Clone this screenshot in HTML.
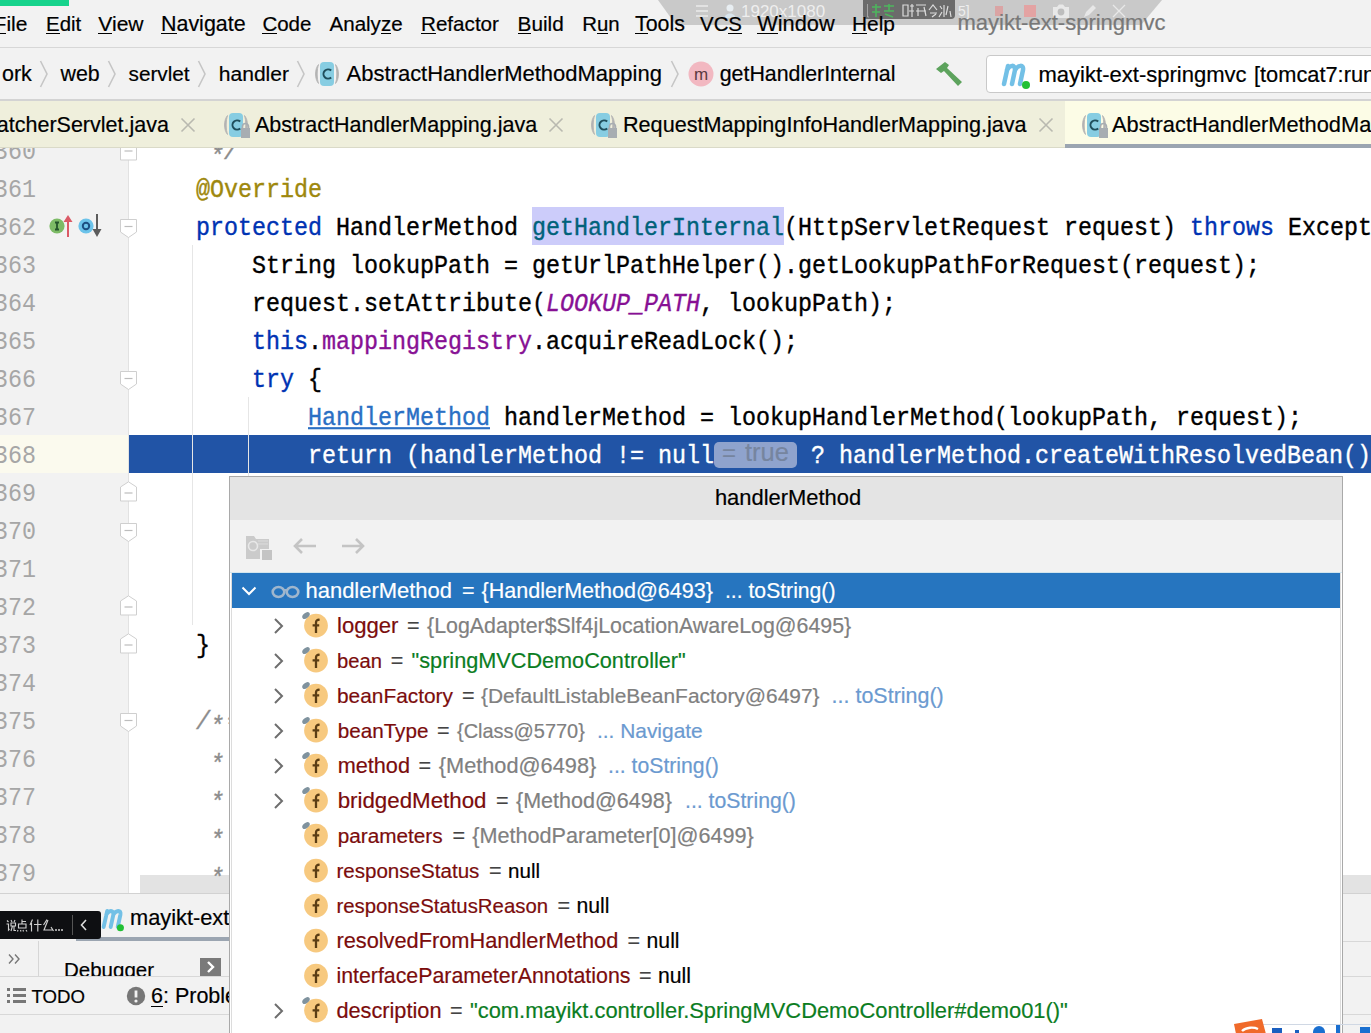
<!DOCTYPE html>
<html><head><meta charset="utf-8">
<style>
*{margin:0;padding:0;box-sizing:border-box}
html,body{width:1371px;height:1033px;overflow:hidden;background:#f2f2f2;font-family:"Liberation Sans",sans-serif;position:relative}
.a{position:absolute;white-space:pre}
.t{-webkit-text-stroke:0.2px currentColor}
#editor{position:absolute;left:0;top:148px;width:1371px;height:745px;background:#fff;overflow:hidden}
#gutter{position:absolute;left:0;top:0;width:129px;height:745px;background:#f2f2f2;border-right:1px solid #e2e2e2}
.ln{position:absolute;left:-6px;width:42px;text-align:right;font-family:"Liberation Mono",monospace;font-size:23.33px;line-height:38px;color:#a6a6a6;padding-top:3px;transform:scaleY(1.07);transform-origin:0 28px}
.cl{position:absolute;left:196px;font-family:"Liberation Mono",monospace;font-size:23.33px;line-height:38px;height:38px;color:#000;white-space:pre;padding-top:3px;transform:scaleY(1.07);transform-origin:0 28px;-webkit-text-stroke:0.35px currentColor}
.kw{color:#0033b3}.an{color:#9e880d}.md{color:#00627a}.fd{color:#871094}.it{font-style:italic}.cm{color:#8c8c8c}.ast{position:relative;top:5px}
.lnk{color:#2a6fc4;text-decoration:underline;text-underline-offset:2px;text-decoration-thickness:1.5px}
.sel,.sel span{color:#fff}
.guide{position:absolute;width:1px;background:#e6e6e6}
#popup{position:absolute;left:229px;top:476px;width:1114px;height:600px;background:#fff;border:1px solid #a9a9a9;overflow:hidden}
</style></head><body>
<div class="a" style="left:0;top:0;width:1371px;height:48px;background:#f2f2f2;border-bottom:1px solid #d7d7d7"></div>
<div class="a" style="left:0;top:0;width:69px;height:6px;background:#17d38c"></div>
<div class="a" style="left:0;top:0;width:1371px;height:26px;background:rgba(150,150,150,0.45);clip-path:polygon(658px 0,1162px 0,1141px 25px,676px 25px)"></div>
<svg class="a" style="left:695px;top:4px" width="14" height="14" viewBox="0 0 14 14"><path d="M1 2 H13 M1 7 H13 M1 12 H13" stroke="#eaeaea" stroke-width="1.5"/></svg>
<svg class="a" style="left:724px;top:3px" width="12" height="16" viewBox="0 0 12 16"><circle cx="6" cy="5" r="3.5" fill="#e8eef2"/><path d="M0.5 15 C1 9 11 9 11.5 15 Z" fill="#d8e4ec"/></svg>
<div class="a" style="left:741px;top:3px;font-size:17px;line-height:17px;color:rgba(255,255,255,0.7)">1920x1080</div>
<div class="a" style="left:863px;top:0;width:92px;height:19px;background:rgba(90,90,90,0.85);border-radius:0 0 4px 4px"></div>
<svg class="a" style="left:866px;top:3px" width="34" height="15" viewBox="0 0 34 15"><path d="M1.5 1 V14 H3" stroke="rgba(200,200,200,.6)" stroke-width="1" fill="none"/><path d="M6 4 H15 M10 1 V14 M6 9 H14 M18 3 H28 M23 1 V8 M18 8 H28 M19 11 L27 14" stroke="rgba(70,200,90,.8)" stroke-width="1.6" fill="none"/></svg>
<svg class="a" style="left:902px;top:3px" width="50" height="15" viewBox="0 0 50 15"><path d="M1 2 H6 V13 H1 Z M8 3 H12 M10 1 V14 M7 8 H12 M14 2 H24 M16 5 V13 M14 8 H24 M22 4 L24 13 M27 7 L31 2 L35 7 M28 10 H35 M30 14 L34 11 M38 3 L40 6 M37 14 L40 9 M42 2 V14 M46 3 L44 12 M48 8 L49 14" stroke="rgba(240,240,240,.85)" stroke-width="1.2" fill="none"/></svg>
<div class="a" style="left:958px;top:4px;font-size:14px;line-height:14px;color:rgba(255,255,255,.7)">5]</div>
<div class="a" style="left:995px;top:6px;width:8px;height:10px;background:rgba(230,140,140,.6)"></div>
<div class="a" style="left:1024px;top:5px;width:12px;height:12px;background:rgba(235,150,150,.75)"></div>
<svg class="a" style="left:1052px;top:3px" width="18" height="16" viewBox="0 0 18 16"><path d="M1 4 H5 L7 1.5 H11 L13 4 H17 V15 H1 Z" fill="rgba(240,240,240,.8)"/><circle cx="9" cy="9" r="3.4" fill="#bdbdbd"/></svg>
<svg class="a" style="left:1082px;top:3px" width="16" height="16" viewBox="0 0 16 16"><path d="M2 14 L4 9 L11 2 L14 5 L7 12 Z" fill="rgba(240,240,240,.75)"/></svg>
<svg class="a" style="left:1112px;top:4px" width="14" height="14" viewBox="0 0 14 14"><path d="M1 1 L13 13 M13 1 L1 13" stroke="rgba(240,240,240,.8)" stroke-width="1.4"/></svg>
<div class="a t" style="left:-6.41px;top:13px;font-family:'Liberation Sans';font-size:21.00px;line-height:1;color:#000">File</div>
<div class="a" style="left:-6.4px;top:32.5px;width:12.8px;height:1.6px;background:#000"></div>
<div class="a t" style="left:46.05px;top:14px;font-family:'Liberation Sans';font-size:20.40px;line-height:1;color:#000">Edit</div>
<div class="a" style="left:46.1px;top:32.5px;width:13.6px;height:1.6px;background:#000"></div>
<div class="a t" style="left:98.30px;top:13px;font-family:'Liberation Sans';font-size:21.07px;line-height:1;color:#000">View</div>
<div class="a" style="left:98.3px;top:32.5px;width:14.1px;height:1.6px;background:#000"></div>
<div class="a t" style="left:161.00px;top:14px;font-family:'Liberation Sans';font-size:21.44px;line-height:1;color:#000">Navigate</div>
<div class="a" style="left:161.0px;top:32.5px;width:15.5px;height:1.6px;background:#000"></div>
<div class="a t" style="left:262.40px;top:14px;font-family:'Liberation Sans';font-size:20.50px;line-height:1;color:#000">Code</div>
<div class="a" style="left:262.4px;top:32.5px;width:14.8px;height:1.6px;background:#000"></div>
<div class="a t" style="left:329.50px;top:14px;font-family:'Liberation Sans';font-size:20.56px;line-height:1;color:#000">Analyze</div>
<div class="a" style="left:380.9px;top:32.5px;width:10.3px;height:1.6px;background:#000"></div>
<div class="a t" style="left:421.00px;top:14px;font-family:'Liberation Sans';font-size:20.63px;line-height:1;color:#000">Refactor</div>
<div class="a" style="left:421.0px;top:32.5px;width:14.9px;height:1.6px;background:#000"></div>
<div class="a t" style="left:517.60px;top:14px;font-family:'Liberation Sans';font-size:20.76px;line-height:1;color:#000">Build</div>
<div class="a" style="left:517.6px;top:32.5px;width:13.8px;height:1.6px;background:#000"></div>
<div class="a t" style="left:582.18px;top:14px;font-family:'Liberation Sans';font-size:20.40px;line-height:1;color:#000">Run</div>
<div class="a" style="left:596.9px;top:32.5px;width:11.3px;height:1.6px;background:#000"></div>
<div class="a t" style="left:635.00px;top:14px;font-family:'Liberation Sans';font-size:21.41px;line-height:1;color:#000">Tools</div>
<div class="a" style="left:635.0px;top:32.5px;width:13.1px;height:1.6px;background:#000"></div>
<div class="a t" style="left:700.04px;top:14px;font-family:'Liberation Sans';font-size:20.40px;line-height:1;color:#000">VCS</div>
<div class="a" style="left:728.4px;top:32.5px;width:13.6px;height:1.6px;background:#000"></div>
<div class="a t" style="left:757.20px;top:13px;font-family:'Liberation Sans';font-size:21.80px;line-height:1;color:#000">Window</div>
<div class="a" style="left:757.2px;top:32.5px;width:20.6px;height:1.6px;background:#000"></div>
<div class="a t" style="left:852.00px;top:14px;font-family:'Liberation Sans';font-size:20.92px;line-height:1;color:#000">Help</div>
<div class="a" style="left:852.0px;top:32.5px;width:15.1px;height:1.6px;background:#000"></div>
<div class="a t" style="left:957.50px;top:12px;font-family:'Liberation Sans';font-size:22.03px;line-height:1;color:#787878">mayikt-ext-springmvc</div>
<div class="a" style="left:0;top:48px;width:1371px;height:53px;background:#f2f2f2;border-bottom:2px solid #d3d3d3"></div>
<div class="a t" style="left:2.01px;top:64px;font-family:'Liberation Sans';font-size:21.50px;line-height:1;color:#000">ork</div>
<div class="a t" style="left:60.51px;top:64px;font-family:'Liberation Sans';font-size:21.36px;line-height:1;color:#000">web</div>
<div class="a t" style="left:128.50px;top:64px;font-family:'Liberation Sans';font-size:20.75px;line-height:1;color:#000">servlet</div>
<div class="a t" style="left:218.80px;top:63px;font-family:'Liberation Sans';font-size:21.05px;line-height:1;color:#000">handler</div>
<div class="a t" style="left:346.60px;top:63px;font-family:'Liberation Sans';font-size:21.99px;line-height:1;color:#000">AbstractHandlerMethodMapping</div>
<div class="a t" style="left:719.70px;top:64px;font-family:'Liberation Sans';font-size:21.36px;line-height:1;color:#000">getHandlerInternal</div>
<svg class="a" style="left:39px;top:60px" width="10" height="28" viewBox="0 0 10 28"><path d="M1.5 1 L8 14 L1.5 27" stroke="#c6c6c6" stroke-width="1.6" fill="none"/></svg>
<svg class="a" style="left:107px;top:60px" width="10" height="28" viewBox="0 0 10 28"><path d="M1.5 1 L8 14 L1.5 27" stroke="#c6c6c6" stroke-width="1.6" fill="none"/></svg>
<svg class="a" style="left:197px;top:60px" width="10" height="28" viewBox="0 0 10 28"><path d="M1.5 1 L8 14 L1.5 27" stroke="#c6c6c6" stroke-width="1.6" fill="none"/></svg>
<svg class="a" style="left:296px;top:60px" width="10" height="28" viewBox="0 0 10 28"><path d="M1.5 1 L8 14 L1.5 27" stroke="#c6c6c6" stroke-width="1.6" fill="none"/></svg>
<svg class="a" style="left:670px;top:60px" width="10" height="28" viewBox="0 0 10 28"><path d="M1.5 1 L8 14 L1.5 27" stroke="#c6c6c6" stroke-width="1.6" fill="none"/></svg>
<svg class="a" style="left:313px;top:60px" width="28" height="28" viewBox="0 0 28 28"><path d="M5.5 4.5 C1.5 9 1.5 19 5.5 23.5 C3.8 19 3.8 9 5.5 4.5 Z" fill="#b3b3b3" stroke="#b3b3b3" stroke-width="0.8"/><path d="M22.5 4.5 C26.5 9 26.5 19 22.5 23.5 C24.2 19 24.2 9 22.5 4.5 Z" fill="#b3b3b3" stroke="#b3b3b3" stroke-width="0.8"/><rect x="7" y="2" width="14" height="24" rx="4" ry="4" fill="#87cde2"/><path d="M18.2 10.6 A4.6 4.6 0 1 0 18.2 17.4" stroke="#1f4e5c" stroke-width="2" fill="none"/></svg>
<svg class="a" style="left:687px;top:60px" width="28" height="28" viewBox="0 0 28 28"><circle cx="14" cy="14" r="12.5" fill="#f2b8c1"/><text x="14" y="20" text-anchor="middle" font-family="Liberation Sans" font-size="17" fill="#5b3a40">m</text></svg>
<svg class="a" style="left:933px;top:60px" width="32" height="28" viewBox="0 0 32 28"><path d="M3 9 L12 2 L16 5 L14 8 L29 22 L25 26 L11 11 L8 13 Z" fill="#5da35d"/></svg>
<div class="a" style="left:986px;top:55px;width:400px;height:38px;background:#fff;border:1px solid #c9c9c9;border-radius:4px"></div>
<svg class="a" style="left:1001px;top:60px" width="34" height="30" viewBox="0 0 34 30"><path d="M3 24 L7 6 M6 10 C9 5 14 4 14 10 L11 24 M14 10 C17 5 23 4 22 10 L19 24" stroke="#73c0e6" stroke-width="4.5" fill="none" stroke-linecap="round"/><circle cx="25" cy="25" r="4" fill="#21c035"/></svg>
<div class="a t" style="left:1038.50px;top:64px;font-family:'Liberation Sans';font-size:22.04px;line-height:1;color:#000">mayikt-ext-springmvc</div>
<div class="a t" style="left:1254.00px;top:64px;font-family:'Liberation Sans';font-size:21.80px;line-height:1;color:#000">[tomcat7:run]</div>
<div class="a" style="left:0;top:101px;width:1371px;height:47px;background:#efefdc;border-bottom:1px solid #dadac8"></div>
<div class="a" style="left:1065px;top:101px;width:320px;height:47px;background:#fcfce6"></div>
<div class="a" style="left:1065px;top:144px;width:320px;height:4px;background:#9ba5b1"></div>
<div class="a t" style="left:-15.15px;top:115px;font-family:'Liberation Sans';font-size:21.50px;line-height:1;color:#000">patcherServlet.java</div>
<svg class="a" style="left:180px;top:117px" width="16" height="16" viewBox="0 0 16 16"><path d="M1.5 1.5 L14.5 14.5 M14.5 1.5 L1.5 14.5" stroke="#b9b9b0" stroke-width="1.6"/></svg>
<svg class="a" style="left:222px;top:111px" width="28" height="28" viewBox="0 0 28 28"><path d="M5.5 4.5 C1.5 9 1.5 19 5.5 23.5 C3.8 19 3.8 9 5.5 4.5 Z" fill="#b3b3b3" stroke="#b3b3b3" stroke-width="0.8"/><path d="M22.5 4.5 C26.5 9 26.5 19 22.5 23.5 C24.2 19 24.2 9 22.5 4.5 Z" fill="#b3b3b3" stroke="#b3b3b3" stroke-width="0.8"/><rect x="7" y="2" width="14" height="24" rx="4" ry="4" fill="#87cde2"/><path d="M18.2 10.6 A4.6 4.6 0 1 0 18.2 17.4" stroke="#1f4e5c" stroke-width="2" fill="none"/><rect x="19" y="17" width="9" height="10" fill="#a7adb2"/><path d="M20.5 18 V15.5 A3 3 0 0 1 26.5 15.5 V18" stroke="#a7adb2" stroke-width="1.6" fill="none"/></svg>
<div class="a t" style="left:255.00px;top:115px;font-family:'Liberation Sans';font-size:21.52px;line-height:1;color:#000">AbstractHandlerMapping.java</div>
<svg class="a" style="left:548px;top:117px" width="16" height="16" viewBox="0 0 16 16"><path d="M1.5 1.5 L14.5 14.5 M14.5 1.5 L1.5 14.5" stroke="#b9b9b0" stroke-width="1.6"/></svg>
<svg class="a" style="left:589px;top:111px" width="28" height="28" viewBox="0 0 28 28"><path d="M5.5 4.5 C1.5 9 1.5 19 5.5 23.5 C3.8 19 3.8 9 5.5 4.5 Z" fill="#b3b3b3" stroke="#b3b3b3" stroke-width="0.8"/><path d="M22.5 4.5 C26.5 9 26.5 19 22.5 23.5 C24.2 19 24.2 9 22.5 4.5 Z" fill="#b3b3b3" stroke="#b3b3b3" stroke-width="0.8"/><rect x="7" y="2" width="14" height="24" rx="4" ry="4" fill="#87cde2"/><path d="M18.2 10.6 A4.6 4.6 0 1 0 18.2 17.4" stroke="#1f4e5c" stroke-width="2" fill="none"/><rect x="19" y="17" width="9" height="10" fill="#a7adb2"/><path d="M20.5 18 V15.5 A3 3 0 0 1 26.5 15.5 V18" stroke="#a7adb2" stroke-width="1.6" fill="none"/></svg>
<div class="a t" style="left:623.00px;top:114px;font-family:'Liberation Sans';font-size:21.62px;line-height:1;color:#000">RequestMappingInfoHandlerMapping.java</div>
<svg class="a" style="left:1038px;top:117px" width="16" height="16" viewBox="0 0 16 16"><path d="M1.5 1.5 L14.5 14.5 M14.5 1.5 L1.5 14.5" stroke="#b9b9b0" stroke-width="1.6"/></svg>
<svg class="a" style="left:1080px;top:111px" width="28" height="28" viewBox="0 0 28 28"><path d="M5.5 4.5 C1.5 9 1.5 19 5.5 23.5 C3.8 19 3.8 9 5.5 4.5 Z" fill="#b3b3b3" stroke="#b3b3b3" stroke-width="0.8"/><path d="M22.5 4.5 C26.5 9 26.5 19 22.5 23.5 C24.2 19 24.2 9 22.5 4.5 Z" fill="#b3b3b3" stroke="#b3b3b3" stroke-width="0.8"/><rect x="7" y="2" width="14" height="24" rx="4" ry="4" fill="#87cde2"/><path d="M18.2 10.6 A4.6 4.6 0 1 0 18.2 17.4" stroke="#1f4e5c" stroke-width="2" fill="none"/><rect x="19" y="17" width="9" height="10" fill="#a7adb2"/><path d="M20.5 18 V15.5 A3 3 0 0 1 26.5 15.5 V18" stroke="#a7adb2" stroke-width="1.6" fill="none"/></svg>
<div class="a t" style="left:1112.00px;top:114px;font-family:'Liberation Sans';font-size:21.80px;line-height:1;color:#000">AbstractHandlerMethodMapping.java</div>
<div id="editor">
<div id="gutter"></div>
<div class="a" style="left:0;top:287px;width:128px;height:38px;background:#fbfaee"></div>
<svg class="a" style="left:119px;top:-8px" width="19" height="21" viewBox="0 0 19 21"><path d="M1.5 20 H17.5 V6 L9.5 0.8 L1.5 6 Z" fill="#fff" stroke="#cfcfcf"/><path d="M5.5 11 H13.5" stroke="#bdbdbd" stroke-width="1.2"/></svg>
<svg class="a" style="left:119px;top:71px" width="19" height="20" viewBox="0 0 19 20"><path d="M1.5 0.5 H17.5 V13 L9.5 18.5 L1.5 13 Z" fill="#fff" stroke="#cfcfcf"/><path d="M5.5 7.5 H13.5" stroke="#bdbdbd" stroke-width="1.2"/></svg>
<svg class="a" style="left:119px;top:223px" width="19" height="20" viewBox="0 0 19 20"><path d="M1.5 0.5 H17.5 V13 L9.5 18.5 L1.5 13 Z" fill="#fff" stroke="#cfcfcf"/><path d="M5.5 7.5 H13.5" stroke="#bdbdbd" stroke-width="1.2"/></svg>
<svg class="a" style="left:119px;top:375px" width="19" height="20" viewBox="0 0 19 20"><path d="M1.5 0.5 H17.5 V13 L9.5 18.5 L1.5 13 Z" fill="#fff" stroke="#cfcfcf"/><path d="M5.5 7.5 H13.5" stroke="#bdbdbd" stroke-width="1.2"/></svg>
<svg class="a" style="left:119px;top:565px" width="19" height="20" viewBox="0 0 19 20"><path d="M1.5 0.5 H17.5 V13 L9.5 18.5 L1.5 13 Z" fill="#fff" stroke="#cfcfcf"/><path d="M5.5 7.5 H13.5" stroke="#bdbdbd" stroke-width="1.2"/></svg>
<svg class="a" style="left:119px;top:333px" width="19" height="21" viewBox="0 0 19 21"><path d="M1.5 20 H17.5 V6 L9.5 0.8 L1.5 6 Z" fill="#fff" stroke="#cfcfcf"/><path d="M5.5 12 H13.5" stroke="#bdbdbd" stroke-width="1.2"/></svg>
<svg class="a" style="left:119px;top:447px" width="19" height="21" viewBox="0 0 19 21"><path d="M1.5 20 H17.5 V6 L9.5 0.8 L1.5 6 Z" fill="#fff" stroke="#cfcfcf"/><path d="M5.5 12 H13.5" stroke="#bdbdbd" stroke-width="1.2"/></svg>
<svg class="a" style="left:119px;top:485px" width="19" height="21" viewBox="0 0 19 21"><path d="M1.5 20 H17.5 V6 L9.5 0.8 L1.5 6 Z" fill="#fff" stroke="#cfcfcf"/><path d="M5.5 12 H13.5" stroke="#bdbdbd" stroke-width="1.2"/></svg>
<svg class="a" style="left:46px;top:64px" width="60" height="28" viewBox="0 0 60 28"><circle cx="11" cy="14" r="7.6" fill="#7dbb66"/><path d="M9 10.5 H13 M11 10.5 V17.5 M9 17.5 H13" stroke="#24542a" stroke-width="1.8"/><path d="M22 25 V8" stroke="#db5a66" stroke-width="2" fill="none"/><path d="M17.5 10 L22 3 L26.5 10 Z" fill="#db5a66"/><circle cx="40" cy="14" r="7.6" fill="#6cc3ea"/><circle cx="40" cy="14" r="3.2" fill="none" stroke="#1c4f82" stroke-width="2"/><path d="M51 2 V19" stroke="#5c5c5c" stroke-width="2" fill="none"/><path d="M46.5 17 L51 25 L55.5 17 Z" fill="#5c5c5c"/></svg>
<div class="a" style="left:140px;top:727px;width:1240px;height:18px;background:#e3e3e3"></div>
<div class="a" style="left:532px;top:59px;width:252px;height:38px;background:#ccccfa"></div>
<div class="a" style="left:129px;top:287px;width:1242px;height:38px;background:#2154a6"></div>
<div class="guide" style="left:192px;top:97px;height:380px"></div>
<div class="guide" style="left:248px;top:249px;height:90px"></div>
<div class="ln" style="top:-17px">360</div>
<div class="ln" style="top:21px">361</div>
<div class="ln" style="top:59px">362</div>
<div class="ln" style="top:97px">363</div>
<div class="ln" style="top:135px">364</div>
<div class="ln" style="top:173px">365</div>
<div class="ln" style="top:211px">366</div>
<div class="ln" style="top:249px">367</div>
<div class="ln" style="top:287px">368</div>
<div class="ln" style="top:325px">369</div>
<div class="ln" style="top:363px">370</div>
<div class="ln" style="top:401px">371</div>
<div class="ln" style="top:439px">372</div>
<div class="ln" style="top:477px">373</div>
<div class="ln" style="top:515px">374</div>
<div class="ln" style="top:553px">375</div>
<div class="ln" style="top:591px">376</div>
<div class="ln" style="top:629px">377</div>
<div class="ln" style="top:667px">378</div>
<div class="ln" style="top:705px">379</div>
<div class="ln" style="top:743px">380</div>
<div class="cl" style="top:-17px"><span class="cm it"> <span class="ast">*</span>/</span></div>
<div class="cl" style="top:21px"><span class="an">@Override</span></div>
<div class="cl" style="top:59px"><span class="kw">protected</span> HandlerMethod <span class="md">getHandlerInternal</span>(HttpServletRequest request) <span class="kw">throws</span> Exception {</div>
<div class="cl" style="top:97px">    String lookupPath = getUrlPathHelper().getLookupPathForRequest(request);</div>
<div class="cl" style="top:135px">    request.setAttribute(<span class="fd it">LOOKUP_PATH</span>, lookupPath);</div>
<div class="cl" style="top:173px">    <span class="kw">this</span>.<span class="fd">mappingRegistry</span>.acquireReadLock();</div>
<div class="cl" style="top:211px">    <span class="kw">try</span> {</div>
<div class="cl" style="top:249px">        <span class="lnk">HandlerMethod</span> handlerMethod = lookupHandlerMethod(lookupPath, request);</div>
<div class="cl sel" style="top:287px">        return (handlerMethod != null<span style="display:inline-block;width:83px"></span> ? handlerMethod.createWithResolvedBean() : null);</div>
<div class="a" style="left:714px;top:294px;width:83px;height:26px;background:#8fa3cd;border-radius:5px"></div>
<div class="a t" style="left:722.00px;top:293px;font-family:'Liberation Sans';font-size:24.00px;line-height:1;color:#76859f">=</div>
<div class="a t" style="left:745.00px;top:292px;font-family:'Liberation Sans';font-size:25.51px;line-height:1;color:#76859f">true</div>
<div class="cl" style="top:477px">}</div>
<div class="cl" style="top:553px"><span class="cm it">/<span class="ast">**</span></span></div>
<div class="cl" style="top:591px"><span class="cm it"> <span class="ast">*</span></span></div>
<div class="cl" style="top:629px"><span class="cm it"> <span class="ast">*</span></span></div>
<div class="cl" style="top:667px"><span class="cm it"> <span class="ast">*</span></span></div>
<div class="cl" style="top:705px"><span class="cm it"> <span class="ast">*</span></span></div>
</div>
<div class="a" style="left:0;top:893px;width:1371px;height:140px;background:#f2f2f2;border-top:1px solid #d2d2d2"></div>
<div class="a" style="left:0;top:976px;width:1371px;height:1px;background:#d8d8d8"></div>
<div class="a" style="left:0;top:1014px;width:1371px;height:1px;background:#d8d8d8"></div>
<div class="a" style="left:1343px;top:941px;width:30px;height:1px;background:#d8d8d8"></div>
<div class="a" style="left:76px;top:937px;width:160px;height:4px;background:#9ba5b1"></div>
<div class="a" style="left:38px;top:941px;width:1px;height:35px;background:#d6d6d6"></div>
<svg class="a" style="left:101px;top:904px" width="30" height="30" viewBox="0 0 34 30"><path d="M3 24 L7 6 M6 10 C9 5 14 4 14 10 L11 24 M14 10 C17 5 23 4 22 10 L19 24" stroke="#73c0e6" stroke-width="4.5" fill="none" stroke-linecap="round"/><circle cx="22" cy="25" r="4" fill="#21c035"/></svg>
<div class="a t" style="left:130.00px;top:907px;font-family:'Liberation Sans';font-size:21.80px;line-height:1;color:#000">mayikt-ext-springmvc</div>
<div class="a" style="left:0;top:911px;width:101px;height:28px;background:#0e0f12;border-radius:0 3px 3px 0"></div>
<svg class="a" style="left:6px;top:919px" width="58" height="14" viewBox="0 0 58 14"><g stroke="#cfcfcf" stroke-width="1.15" fill="none"><path d="M1 1.5 L2.5 3 M0.5 5 H2.5 V11 L3.5 10 M5 1 L6 3 M9 1 L8 3 M5 4 H9.5 V7 H5 Z M6.5 7 L5 12 M8 7 V11.5 H10"/><path d="M16 0.5 V5 M16 2.5 H20 M12.5 5 H20 V9 H12.5 Z M12 11 L11.5 12.5 M14.5 11 L15 12.5 M17 11 L17.5 12.5 M20 11 L21 12.5"/><path d="M26.5 0.5 L24 6 M25.5 4 V12.5 M28 5.5 H35.5 M31.8 0.5 V12.5"/><path d="M41 0.5 L37.5 6 M42 1 L38 11 H47 M45 8 L47.5 12"/></g><g fill="#cfcfcf"><circle cx="50" cy="11" r="1"/><circle cx="53" cy="11" r="1"/><circle cx="56" cy="11" r="1"/></g></svg>
<div class="a" style="left:72px;top:915px;width:1px;height:20px;background:#555"></div>
<svg class="a" style="left:79px;top:918px" width="10" height="14" viewBox="0 0 10 14"><path d="M7 2 L2.5 7 L7 12" stroke="#ddd" stroke-width="1.6" fill="none"/></svg>
<svg class="a" style="left:7px;top:953px" width="14" height="12" viewBox="0 0 14 12"><path d="M2 1.5 L6 6 L2 10.5 M8 1.5 L12 6 L8 10.5" stroke="#777" stroke-width="1.4" fill="none"/></svg>
<div style="position:absolute;left:0;top:941px;width:1371px;height:35px;overflow:hidden"><div class="a t" style="left:64.00px;top:19px;font-family:'Liberation Sans';font-size:20.50px;line-height:1;color:#000">Debugger</div><div class="a" style="left:200px;top:17px;width:21px;height:18px;background:#7a7a7a"></div><svg class="a" style="left:204px;top:19px" width="14" height="14" viewBox="0 0 14 14"><path d="M4 2 L9 7 L4 12" stroke="#fff" stroke-width="2.4" fill="none"/></svg></div>
<svg class="a" style="left:7px;top:987px" width="20" height="17" viewBox="0 0 20 17"><path d="M0 2.5 H3 M6 2.5 H19 M0 8.5 H3 M6 8.5 H19 M0 14.5 H3 M6 14.5 H19" stroke="#777" stroke-width="3"/></svg>
<div class="a t" style="left:31.50px;top:988px;font-family:'Liberation Sans';font-size:18.64px;line-height:1;color:#000">TODO</div>
<svg class="a" style="left:126px;top:986px" width="20" height="20" viewBox="0 0 20 20"><circle cx="10" cy="10" r="9.2" fill="#777"/><path d="M10 4.5 V11.5" stroke="#f2f2f2" stroke-width="2.8"/><circle cx="10" cy="15" r="1.6" fill="#f2f2f2"/></svg>
<div class="a t" style="left:151.00px;top:986px;font-family:'Liberation Sans';font-size:21.50px;line-height:1;color:#000">6: Problems</div>
<div class="a" style="left:151.0px;top:1005.5px;width:12.0px;height:1.6px;background:#000"></div>
<div id="popup">
<div class="a" style="left:0;top:0;width:1112px;height:43px;background:#e4e4e4"></div>
<div class="a" style="left:0;top:43px;width:1112px;height:53px;background:#f2f2f2;border-bottom:1px solid #d3e6ee"></div>
<svg class="a" style="left:15px;top:58px" width="28" height="26" viewBox="0 0 28 26"><path d="M1 1 H9 L11 4 H24 V14 H15 V24 H1 Z" fill="#cbcbcb"/><circle cx="8" cy="11" r="4.5" fill="none" stroke="#e8e8e8" stroke-width="1.6"/><rect x="17" y="15" width="10" height="10" fill="#c4c4c4"/><path d="M13 6 H23 M13 9 H23" stroke="#dcdcdc" stroke-width="1"/></svg>
<svg class="a" style="left:63px;top:60px" width="24" height="18" viewBox="0 0 24 18"><path d="M23 9 H2 M9 2 L2 9 L9 16" stroke="#c4c4c4" stroke-width="2.6" fill="none"/></svg>
<svg class="a" style="left:111px;top:60px" width="24" height="18" viewBox="0 0 24 18"><path d="M1 9 H22 M15 2 L22 9 L15 16" stroke="#c4c4c4" stroke-width="2.6" fill="none"/></svg>
<div class="a" style="left:1px;top:96px;width:1px;height:600px;background:#dcdcdc"></div>
<div class="a" style="left:1110px;top:96px;width:1px;height:600px;background:#dcdcdc"></div>
<div class="a" style="left:2px;top:96px;width:1108px;height:35px;background:#2675bf"></div>
<svg class="a" style="left:11px;top:106px" width="16" height="16" viewBox="0 0 16 16"><path d="M1.5 4.5 L8 11 L14.5 4.5" stroke="#fff" stroke-width="2" fill="none"/></svg>
<svg class="a" style="left:41px;top:106px" width="30" height="17" viewBox="0 0 30 17"><ellipse cx="7.5" cy="9" rx="5.8" ry="5" stroke="#9fb6cd" stroke-width="2.6" fill="none"/><ellipse cx="21.5" cy="9" rx="5.8" ry="5" stroke="#9fb6cd" stroke-width="2.6" fill="none"/><path d="M12.5 7 L16.5 7" stroke="#9fb6cd" stroke-width="2"/></svg>
<svg class="a" style="left:42px;top:140px" width="14" height="18" viewBox="0 0 14 18"><path d="M3 2 L10 9 L3 16" stroke="#6e6e6e" stroke-width="2" fill="none"/></svg>
<svg class="a" style="left:70px;top:132px" width="30" height="30" viewBox="0 0 30 30"><circle cx="16" cy="16.6" r="11.9" fill="#f7c97f"/><path d="M16 24 V13.5 C16 11.5 17.2 10.6 19.6 10.8 M12.6 16.4 H19.2" stroke="#5b3d14" stroke-width="2.3" fill="none"/><ellipse cx="6" cy="6.5" rx="4.3" ry="2.6" transform="rotate(-40 6 6.5)" fill="#7f929e"/></svg>
<svg class="a" style="left:42px;top:175px" width="14" height="18" viewBox="0 0 14 18"><path d="M3 2 L10 9 L3 16" stroke="#6e6e6e" stroke-width="2" fill="none"/></svg>
<svg class="a" style="left:70px;top:167px" width="30" height="30" viewBox="0 0 30 30"><circle cx="16" cy="16.6" r="11.9" fill="#f7c97f"/><path d="M16 24 V13.5 C16 11.5 17.2 10.6 19.6 10.8 M12.6 16.4 H19.2" stroke="#5b3d14" stroke-width="2.3" fill="none"/><ellipse cx="6" cy="6.5" rx="4.3" ry="2.6" transform="rotate(-40 6 6.5)" fill="#7f929e"/></svg>
<svg class="a" style="left:42px;top:210px" width="14" height="18" viewBox="0 0 14 18"><path d="M3 2 L10 9 L3 16" stroke="#6e6e6e" stroke-width="2" fill="none"/></svg>
<svg class="a" style="left:70px;top:202px" width="30" height="30" viewBox="0 0 30 30"><circle cx="16" cy="16.6" r="11.9" fill="#f7c97f"/><path d="M16 24 V13.5 C16 11.5 17.2 10.6 19.6 10.8 M12.6 16.4 H19.2" stroke="#5b3d14" stroke-width="2.3" fill="none"/><ellipse cx="6" cy="6.5" rx="4.3" ry="2.6" transform="rotate(-40 6 6.5)" fill="#7f929e"/></svg>
<svg class="a" style="left:42px;top:245px" width="14" height="18" viewBox="0 0 14 18"><path d="M3 2 L10 9 L3 16" stroke="#6e6e6e" stroke-width="2" fill="none"/></svg>
<svg class="a" style="left:70px;top:237px" width="30" height="30" viewBox="0 0 30 30"><circle cx="16" cy="16.6" r="11.9" fill="#f7c97f"/><path d="M16 24 V13.5 C16 11.5 17.2 10.6 19.6 10.8 M12.6 16.4 H19.2" stroke="#5b3d14" stroke-width="2.3" fill="none"/><ellipse cx="6" cy="6.5" rx="4.3" ry="2.6" transform="rotate(-40 6 6.5)" fill="#7f929e"/></svg>
<svg class="a" style="left:42px;top:280px" width="14" height="18" viewBox="0 0 14 18"><path d="M3 2 L10 9 L3 16" stroke="#6e6e6e" stroke-width="2" fill="none"/></svg>
<svg class="a" style="left:70px;top:272px" width="30" height="30" viewBox="0 0 30 30"><circle cx="16" cy="16.6" r="11.9" fill="#f7c97f"/><path d="M16 24 V13.5 C16 11.5 17.2 10.6 19.6 10.8 M12.6 16.4 H19.2" stroke="#5b3d14" stroke-width="2.3" fill="none"/><ellipse cx="6" cy="6.5" rx="4.3" ry="2.6" transform="rotate(-40 6 6.5)" fill="#7f929e"/></svg>
<svg class="a" style="left:42px;top:315px" width="14" height="18" viewBox="0 0 14 18"><path d="M3 2 L10 9 L3 16" stroke="#6e6e6e" stroke-width="2" fill="none"/></svg>
<svg class="a" style="left:70px;top:307px" width="30" height="30" viewBox="0 0 30 30"><circle cx="16" cy="16.6" r="11.9" fill="#f7c97f"/><path d="M16 24 V13.5 C16 11.5 17.2 10.6 19.6 10.8 M12.6 16.4 H19.2" stroke="#5b3d14" stroke-width="2.3" fill="none"/><ellipse cx="6" cy="6.5" rx="4.3" ry="2.6" transform="rotate(-40 6 6.5)" fill="#7f929e"/></svg>
<svg class="a" style="left:70px;top:342px" width="30" height="30" viewBox="0 0 30 30"><circle cx="16" cy="16.6" r="11.9" fill="#f7c97f"/><path d="M16 24 V13.5 C16 11.5 17.2 10.6 19.6 10.8 M12.6 16.4 H19.2" stroke="#5b3d14" stroke-width="2.3" fill="none"/><ellipse cx="6" cy="6.5" rx="4.3" ry="2.6" transform="rotate(-40 6 6.5)" fill="#7f929e"/></svg>
<svg class="a" style="left:70px;top:377px" width="30" height="30" viewBox="0 0 30 30"><circle cx="16" cy="16.6" r="11.9" fill="#f7c97f"/><path d="M16 24 V13.5 C16 11.5 17.2 10.6 19.6 10.8 M12.6 16.4 H19.2" stroke="#5b3d14" stroke-width="2.3" fill="none"/></svg>
<svg class="a" style="left:70px;top:412px" width="30" height="30" viewBox="0 0 30 30"><circle cx="16" cy="16.6" r="11.9" fill="#f7c97f"/><path d="M16 24 V13.5 C16 11.5 17.2 10.6 19.6 10.8 M12.6 16.4 H19.2" stroke="#5b3d14" stroke-width="2.3" fill="none"/></svg>
<svg class="a" style="left:70px;top:447px" width="30" height="30" viewBox="0 0 30 30"><circle cx="16" cy="16.6" r="11.9" fill="#f7c97f"/><path d="M16 24 V13.5 C16 11.5 17.2 10.6 19.6 10.8 M12.6 16.4 H19.2" stroke="#5b3d14" stroke-width="2.3" fill="none"/></svg>
<svg class="a" style="left:70px;top:482px" width="30" height="30" viewBox="0 0 30 30"><circle cx="16" cy="16.6" r="11.9" fill="#f7c97f"/><path d="M16 24 V13.5 C16 11.5 17.2 10.6 19.6 10.8 M12.6 16.4 H19.2" stroke="#5b3d14" stroke-width="2.3" fill="none"/></svg>
<svg class="a" style="left:42px;top:525px" width="14" height="18" viewBox="0 0 14 18"><path d="M3 2 L10 9 L3 16" stroke="#6e6e6e" stroke-width="2" fill="none"/></svg>
<svg class="a" style="left:70px;top:517px" width="30" height="30" viewBox="0 0 30 30"><circle cx="16" cy="16.6" r="11.9" fill="#f7c97f"/><path d="M16 24 V13.5 C16 11.5 17.2 10.6 19.6 10.8 M12.6 16.4 H19.2" stroke="#5b3d14" stroke-width="2.3" fill="none"/><ellipse cx="6" cy="6.5" rx="4.3" ry="2.6" transform="rotate(-40 6 6.5)" fill="#7f929e"/></svg>
</div>
<div class="a t" style="left:714.90px;top:487px;font-family:'Liberation Sans';font-size:21.93px;line-height:1;color:#000">handlerMethod</div>
<div class="a t" style="left:305.50px;top:580px;font-family:'Liberation Sans';font-size:21.96px;line-height:1;color:#fff">handlerMethod</div>
<div class="a t" style="left:462.00px;top:581px;font-family:'Liberation Sans';font-size:21.50px;line-height:1;color:#fff">=</div>
<div class="a t" style="left:481.60px;top:581px;font-family:'Liberation Sans';font-size:21.54px;line-height:1;color:#fff">{HandlerMethod@6493}</div>
<div class="a t" style="left:725.00px;top:580px;font-family:'Liberation Sans';font-size:21.15px;line-height:1;color:#fff">... toString()</div>
<div class="a t" style="left:337.00px;top:615px;font-family:'Liberation Sans';font-size:22.12px;line-height:1;color:#7b0c0c">logger</div>
<div class="a t" style="left:407.00px;top:616px;font-family:'Liberation Sans';font-size:21.50px;line-height:1;color:#444">=</div>
<div class="a t" style="left:427.00px;top:616px;font-family:'Liberation Sans';font-size:21.38px;line-height:1;color:#808080">{LogAdapter$Slf4jLocationAwareLog@6495}</div>
<div class="a t" style="left:337.00px;top:651px;font-family:'Liberation Sans';font-size:20.22px;line-height:1;color:#7b0c0c">bean</div>
<div class="a t" style="left:390.80px;top:651px;font-family:'Liberation Sans';font-size:21.50px;line-height:1;color:#444">=</div>
<div class="a t" style="left:411.60px;top:650px;font-family:'Liberation Sans';font-size:21.66px;line-height:1;color:#0b7d1f">"springMVCDemoController"</div>
<div class="a t" style="left:337.00px;top:686px;font-family:'Liberation Sans';font-size:20.86px;line-height:1;color:#7b0c0c">beanFactory</div>
<div class="a t" style="left:462.00px;top:686px;font-family:'Liberation Sans';font-size:21.50px;line-height:1;color:#444">=</div>
<div class="a t" style="left:481.00px;top:686px;font-family:'Liberation Sans';font-size:20.91px;line-height:1;color:#808080">{DefaultListableBeanFactory@6497}</div>
<div class="a t" style="left:831.60px;top:686px;font-family:'Liberation Sans';font-size:21.47px;line-height:1;color:#6b9ad0">... toString()</div>
<div class="a t" style="left:337.70px;top:721px;font-family:'Liberation Sans';font-size:20.66px;line-height:1;color:#7b0c0c">beanType</div>
<div class="a t" style="left:437.00px;top:721px;font-family:'Liberation Sans';font-size:21.50px;line-height:1;color:#444">=</div>
<div class="a t" style="left:457.00px;top:722px;font-family:'Liberation Sans';font-size:19.97px;line-height:1;color:#808080">{Class@5770}</div>
<div class="a t" style="left:596.90px;top:721px;font-family:'Liberation Sans';font-size:20.93px;line-height:1;color:#6b9ad0">... Navigate</div>
<div class="a t" style="left:337.70px;top:755px;font-family:'Liberation Sans';font-size:21.68px;line-height:1;color:#7b0c0c">method</div>
<div class="a t" style="left:418.60px;top:756px;font-family:'Liberation Sans';font-size:21.50px;line-height:1;color:#444">=</div>
<div class="a t" style="left:438.80px;top:755px;font-family:'Liberation Sans';font-size:21.74px;line-height:1;color:#808080">{Method@6498}</div>
<div class="a t" style="left:608.00px;top:755px;font-family:'Liberation Sans';font-size:21.21px;line-height:1;color:#6b9ad0">... toString()</div>
<div class="a t" style="left:337.70px;top:790px;font-family:'Liberation Sans';font-size:22.31px;line-height:1;color:#7b0c0c">bridgedMethod</div>
<div class="a t" style="left:496.00px;top:791px;font-family:'Liberation Sans';font-size:21.50px;line-height:1;color:#444">=</div>
<div class="a t" style="left:516.00px;top:791px;font-family:'Liberation Sans';font-size:21.53px;line-height:1;color:#808080">{Method@6498}</div>
<div class="a t" style="left:685.00px;top:791px;font-family:'Liberation Sans';font-size:21.24px;line-height:1;color:#6b9ad0">... toString()</div>
<div class="a t" style="left:337.70px;top:826px;font-family:'Liberation Sans';font-size:20.75px;line-height:1;color:#7b0c0c">parameters</div>
<div class="a t" style="left:452.50px;top:826px;font-family:'Liberation Sans';font-size:21.50px;line-height:1;color:#444">=</div>
<div class="a t" style="left:472.30px;top:825px;font-family:'Liberation Sans';font-size:21.62px;line-height:1;color:#808080">{MethodParameter[0]@6499}</div>
<div class="a t" style="left:336.40px;top:861px;font-family:'Liberation Sans';font-size:20.58px;line-height:1;color:#7b0c0c">responseStatus</div>
<div class="a t" style="left:489.00px;top:861px;font-family:'Liberation Sans';font-size:21.50px;line-height:1;color:#444">=</div>
<div class="a t" style="left:508.00px;top:861px;font-family:'Liberation Sans';font-size:20.58px;line-height:1;color:#000">null</div>
<div class="a t" style="left:336.40px;top:896px;font-family:'Liberation Sans';font-size:20.38px;line-height:1;color:#7b0c0c">responseStatusReason</div>
<div class="a t" style="left:557.60px;top:896px;font-family:'Liberation Sans';font-size:21.50px;line-height:1;color:#444">=</div>
<div class="a t" style="left:576.50px;top:895px;font-family:'Liberation Sans';font-size:21.22px;line-height:1;color:#000">null</div>
<div class="a t" style="left:336.40px;top:930px;font-family:'Liberation Sans';font-size:21.77px;line-height:1;color:#7b0c0c">resolvedFromHandlerMethod</div>
<div class="a t" style="left:627.60px;top:931px;font-family:'Liberation Sans';font-size:21.50px;line-height:1;color:#444">=</div>
<div class="a t" style="left:646.60px;top:930px;font-family:'Liberation Sans';font-size:21.16px;line-height:1;color:#000">null</div>
<div class="a t" style="left:336.40px;top:966px;font-family:'Liberation Sans';font-size:21.33px;line-height:1;color:#7b0c0c">interfaceParameterAnnotations</div>
<div class="a t" style="left:639.00px;top:966px;font-family:'Liberation Sans';font-size:21.50px;line-height:1;color:#444">=</div>
<div class="a t" style="left:658.00px;top:965px;font-family:'Liberation Sans';font-size:21.22px;line-height:1;color:#000">null</div>
<div class="a t" style="left:336.40px;top:1000px;font-family:'Liberation Sans';font-size:21.74px;line-height:1;color:#7b0c0c">description</div>
<div class="a t" style="left:450.00px;top:1001px;font-family:'Liberation Sans';font-size:21.50px;line-height:1;color:#444">=</div>
<div class="a t" style="left:470.00px;top:1000px;font-family:'Liberation Sans';font-size:21.88px;line-height:1;color:#0b7d1f">"com.mayikt.controller.SpringMVCDemoController#demo01()"</div>
<div class="a" style="left:1262px;top:1024px;width:110px;height:1px;background:#d0d8e4"></div>
<svg class="a" style="left:1232px;top:1018px" width="40" height="16" viewBox="0 0 40 16"><path d="M2 6 L30 1 L34 16 L4 16 Z" fill="#f06a2a"/><path d="M10 13 C14 9 22 9 26 11" stroke="#fff" stroke-width="2.4" fill="none"/></svg>
<div class="a" style="left:1272px;top:1028px;width:10px;height:5px;background:#1a5fc0"></div>
<div class="a" style="left:1295px;top:1030px;width:4px;height:3px;background:#1a5fc0"></div>
<div class="a" style="left:1313px;top:1026px;width:12px;height:7px;border-radius:6px 6px 0 0;background:#1a6fd0"></div>
<div class="a" style="left:1336px;top:1025px;width:4px;height:8px;background:#1a6fd0"></div>
<div class="a" style="left:1360px;top:1027px;width:10px;height:6px;background:#1a6fd0"></div>
</body></html>
